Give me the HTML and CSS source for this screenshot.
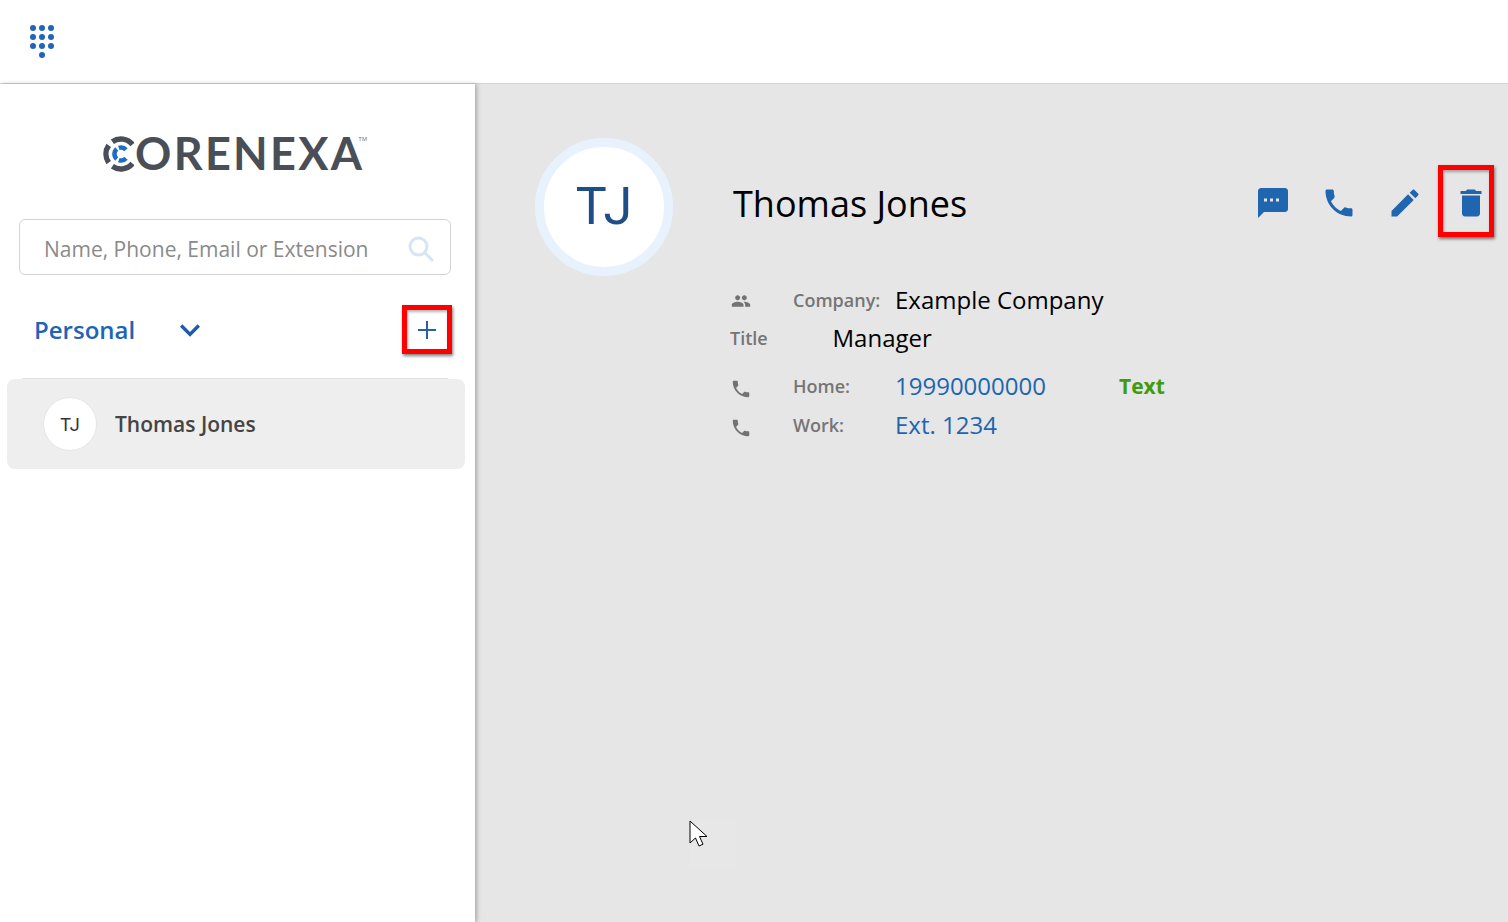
FILE: index.html
```html
<!DOCTYPE html>
<html lang="en">
<head>
  <meta charset="UTF-8">
  <title>Contacts</title>
  <link rel="stylesheet" href="styles.css">
</head>
<body>

<!--top bar-->
<div class="topbar">
  <svg class="dialpad" width="26" height="36" viewBox="0 0 26 36">
    <circle cx="4" cy="5" r="3"/><circle cx="13" cy="5" r="3"/><circle cx="22" cy="5" r="3"/>
    <circle cx="4" cy="14" r="3"/><circle cx="13" cy="14" r="3"/><circle cx="22" cy="14" r="3"/>
    <circle cx="4" cy="23" r="3"/><circle cx="13" cy="23" r="3"/><circle cx="22" cy="23" r="3"/>
    <circle cx="13" cy="32" r="3"/>
  </svg>
</div>

<div class="content">
  <!--contact list-->
  <div class="sidebar">
    <div class="logo">
      <svg class="logo-mark" width="31" height="36" viewBox="0 0 31 36">
        <path class="mark-outer" d="M29.500 8.400A15 15 0 0 0 9.400 5.700M5.700 9.400A15 15 0 0 0 5.700 26.600M9.400 30.300A15 15 0 0 0 29.500 27.600"/>
        <path class="mark-inner" d="M23 13.800A6.500 6.500 0 0 0 15.800 11.900M13.800 13A6.500 6.500 0 0 0 13.800 23M15.800 24.100A6.500 6.500 0 0 0 23 22.200"/>
      </svg>
      <span class="logo-text">ORENEXA</span>
      <span class="logo-tm">TM</span>
    </div>

    <div class="search">
      <span class="search-text">Name, Phone, Email or Extension</span>
      <svg width="28" height="28" viewBox="0 0 28 28" class="search-icon">
        <circle cx="11.500" cy="11.500" r="8.500"/>
        <path d="M18 18l8 8"/>
      </svg>
    </div>

    <div class="group">
      <span class="group-name">Personal</span>
      <svg class="chevron" width="40" height="40" viewBox="0 0 24 24"><path d="M16.59 8.59L12 13.17 7.41 8.59 6 10l6 6 6-6z"/></svg>
      <svg class="plus" width="18" height="18" viewBox="0 0 18 18"><path d="M9 0v18M0 9h18"/></svg>
    </div>

    <div class="contact-item">
      <div class="contact-avatar">TJ</div>
      <span class="contact-name">Thomas Jones</span>
    </div>
  </div>

  <!--contact detail-->
  <div class="detail">
    <div class="detail-head">
      <div class="detail-avatar">TJ</div>
      <div class="detail-name">Thomas Jones</div>
      <div class="actions">
        <svg width="36" height="36" viewBox="0 0 24 24"><path d="M20 2H4c-1.100 0-1.990.9-1.990 2L2 22l4-4h14c1.100 0 2-.9 2-2V4c0-1.100-.9-2-2-2zM8 11H6V9h2v2zm4 0h-2V9h2v2zm4 0h-2V9h2v2z"/></svg>
        <svg width="36" height="36" viewBox="0 0 24 24"><path d="M6.620 10.790c1.440 2.830 3.760 5.140 6.590 6.590l2.200-2.200c.27-.27.67-.36 1.020-.24 1.120.37 2.330.57 3.570.57.55 0 1 .45 1 1V20c0 .55-.45 1-1 1-9.390 0-17-7.610-17-17 0-.55.45-1 1-1h3.500c.55 0 1 .45 1 1 0 1.250.2 2.450.57 3.570.11.35.03.74-.25 1.020l-2.200 2.200z"/></svg>
        <svg width="36" height="36" viewBox="0 0 24 24"><path d="M3 17.250V21h3.750L17.810 9.940l-3.750-3.750L3 17.250zM20.710 7.040c.39-.39.39-1.020 0-1.410l-2.340-2.340c-.39-.39-1.020-.39-1.410 0l-1.830 1.830 3.750 3.750 1.830-1.830z"/></svg>
        <svg width="36" height="36" viewBox="0 0 24 24"><path d="M6 19c0 1.100.9 2 2 2h8c1.100 0 2-.9 2-2V7H6v12zM19 4h-3.500l-1-1h-5l-1 1H5v2h14V4z"/></svg>
      </div>
    </div>

    <div class="info">
      <div class="info-row">
        <span class="info-icon"><svg width="20" height="20" viewBox="0 0 24 24"><path d="M16 11c1.660 0 2.990-1.340 2.990-3S17.660 5 16 5c-1.660 0-3 1.340-3 3s1.340 3 3 3zm-8 0c1.660 0 2.990-1.340 2.990-3S9.660 5 8 5C6.340 5 5 6.340 5 8s1.340 3 3 3zm0 2c-2.330 0-7 1.170-7 3.500V19h14v-2.500c0-2.330-4.670-3.500-7-3.500zm8 0c-.29 0-.62.02-.97.05 1.160.84 1.970 1.970 1.970 3.450V19h6v-2.500c0-2.330-4.670-3.500-7-3.500z"/></svg></span>
        <span class="info-label">Company:</span>
        <span class="info-value">Example Company</span>
      </div>
      <div class="info-row">
        <span class="info-label title-label">Title</span>
        <span class="info-value">Manager</span>
      </div>
      <div class="info-row phone-first">
        <span class="info-icon phone-icon"><svg width="22" height="22" viewBox="0 0 24 24"><path d="M6.620 10.790c1.440 2.830 3.760 5.140 6.590 6.590l2.200-2.200c.27-.27.67-.36 1.020-.24 1.120.37 2.330.57 3.570.57.55 0 1 .45 1 1V20c0 .55-.45 1-1 1-9.390 0-17-7.610-17-17 0-.55.45-1 1-1h3.500c.55 0 1 .45 1 1 0 1.250.2 2.450.57 3.570.11.35.03.74-.25 1.020l-2.200 2.200z"/></svg></span>
        <span class="info-label">Home:</span>
        <span class="info-value phone-value">19990000000</span>
        <span class="text-link">Text</span>
      </div>
      <div class="info-row">
        <span class="info-icon phone-icon"><svg width="22" height="22" viewBox="0 0 24 24"><path d="M6.620 10.790c1.440 2.830 3.760 5.140 6.590 6.590l2.200-2.200c.27-.27.67-.36 1.020-.24 1.120.37 2.330.57 3.570.57.55 0 1 .45 1 1V20c0 .55-.45 1-1 1-9.390 0-17-7.610-17-17 0-.55.45-1 1-1h3.500c.55 0 1 .45 1 1 0 1.250.2 2.450.57 3.570.11.35.03.74-.25 1.020l-2.200 2.200z"/></svg></span>
        <span class="info-label">Work:</span>
        <span class="info-value phone-value">Ext. 1234</span>
      </div>
    </div>
  </div>
</div>

<!--annotations over the screenshot-->
<div class="mark mark-add"></div>
<div class="mark mark-delete"></div>
<div class="cursor-glow"></div>
<svg class="cursor" width="20" height="28" viewBox="0 0 20 28">
  <path d="M1 1v22l5.500-5 3.500 8 4-1.800-3.500-7.700H18z"/>
</svg>

</body>
</html>
```

FILE: styles.css
```css
*{
  margin: 0;
  padding: 0;
  box-sizing: border-box;
}
html,body{
  height: 100%;
  overflow: hidden;
}
body{
  display: flex;
  flex-direction: column;
  font-family: "Open Sans", "Noto Sans", sans-serif;
  background-color: #fff;
}
svg{
  display: block;
  flex: none;
}

/* top bar */
.topbar{
  height: 84px;
  padding: 23px 0 0 29px;
  border-bottom: 1px solid #d4d4d4;
}
.dialpad{
  fill: #2065b8;
}

.content{
  flex: 1;
  display: flex;
  min-height: 0;
}

/* sidebar */
.sidebar{
  width: 475px;
  flex: none;
  background-color: #fff;
  box-shadow: 2px 0 4px rgba(0,0,0,.25);
  position: relative;
}
.logo{
  display: flex;
  align-items: center;
  height: 135px;
  padding: 4px 0 0 103px;
}
.logo-mark{
  margin-right: 1px;
}
.mark-outer{
  fill: none;
  stroke: #4a4e57;
  stroke-width: 5.5;
}
.mark-inner{
  fill: none;
  stroke: #1e6fc4;
  stroke-width: 4.5;
}
.logo-text{
  font-family: "Lato", sans-serif;
  font-size: 45px;
  font-weight: 700;
  letter-spacing: 2.300px;
  line-height: 1;
  color: #4a4e57;
}
.logo-tm{
  align-self: flex-start;
  margin: 48px 0 0 -6px;
  font-family: "Liberation Sans", sans-serif;
  font-size: 6px;
  color: #777;
}
.search{
  display: flex;
  align-items: center;
  justify-content: space-between;
  height: 56px;
  margin: 0 24px 0 19px;
  padding: 0 15px 0 24px;
  border: 1px solid #d3d3d3;
  border-radius: 6px;
}
.search-text{
  padding-top: 3px;
  font-size: 21px;
  color: #8a8a8a;
}
.search-icon{
  fill: none;
  stroke: #d6e4f5;
  stroke-width: 3;
  margin-top: 3px;
}
.group{
  display: flex;
  align-items: center;
  height: 104px;
  margin: 0 27px 0 22px;
  padding: 6px 0 0 12px;
  border-bottom: 1px solid #e3e3e3;
}
.group-name{
  width: 136px;
  font-size: 24px;
  font-weight: 600;
  color: #2163b4;
}
.chevron{
  fill: #1d5ba8;
}
.plus{
  margin-left: auto;
  margin-right: 12px;
  fill: none;
  stroke: #2a5fa8;
  stroke-width: 2;
}
.contact-item{
  display: flex;
  align-items: center;
  height: 90px;
  margin: 0 10px 0 7px;
  padding-left: 36px;
  border-radius: 8px;
  background-color: #eee;
}
.contact-avatar{
  display: flex;
  align-items: center;
  justify-content: center;
  width: 54px;
  height: 54px;
  margin-right: 18px;
  padding-left: 1px;
  border: 1px solid #e6e6e6;
  border-radius: 50%;
  background-color: #fff;
  font-family: "Roboto", sans-serif;
  font-size: 18px;
  letter-spacing: 1px;
  color: #333;
}
.contact-name{
  font-size: 21px;
  font-weight: 600;
  color: #444;
}

/* detail panel */
.detail{
  flex: 1;
  padding: 54px 14px 0 60px;
  background-color: #e6e6e6;
}
.detail-head{
  display: flex;
  align-items: center;
}
.detail-avatar{
  display: flex;
  align-items: center;
  justify-content: center;
  width: 138px;
  height: 138px;
  margin-right: 60px;
  padding: 0 0 2px 3px;
  border: 9px solid #e8f2fc;
  border-radius: 50%;
  background-color: #fff;
  font-family: "Roboto", sans-serif;
  font-size: 52px;
  letter-spacing: 3px;
  color: #1d4f86;
}
.detail-name{
  flex: 1;
  padding-bottom: 8px;
  font-size: 36px;
  color: #000;
}
.actions{
  display: flex;
  gap: 30px;
  padding-right: 5px;
  margin-bottom: 8px;
  fill: #2065b0;
}
.info{
  margin: 5px 0 0 195px;
}
.info-row{
  display: flex;
  align-items: center;
  height: 38px;
}
.phone-first{
  margin-top: 10px;
  margin-bottom: 1px;
}
.info-icon{
  width: 63px;
  padding: 2px 0 0 1px;
  fill: #737373;
}
.phone-icon{
  padding: 5px 0 0;
}
.info-label{
  width: 102px;
  font-size: 18px;
  font-weight: 600;
  color: #757575;
}
.title-label{
  width: 102.500px;
}
.info-value{
  padding-bottom: 2px;
  font-size: 24px;
  color: #000;
}
.phone-value{
  width: 224px;
  color: #2065b0;
}
.text-link{
  font-size: 21px;
  font-weight: 700;
  color: #3f9c0f;
}

/* red boxes and pointer */
.mark{
  position: absolute;
  border: 5px solid #f00;
  box-shadow: 1px 2px 3px rgba(0,0,0,.5), inset 1px 2px 3px rgba(0,0,0,.3);
}
.mark-add{
  left: 402px;
  top: 305px;
  width: 50px;
  height: 49px;
}
.mark-delete{
  left: 1438px;
  top: 165px;
  width: 56px;
  height: 72px;
}
.cursor-glow{
  position: absolute;
  left: 690px;
  top: 820px;
  width: 46px;
  height: 48px;
  background-color: #e7e7e7;
}
.cursor{
  position: absolute;
  left: 689px;
  top: 820px;
  fill: #fff;
  stroke: #000;
  stroke-width: 1;
}
```
